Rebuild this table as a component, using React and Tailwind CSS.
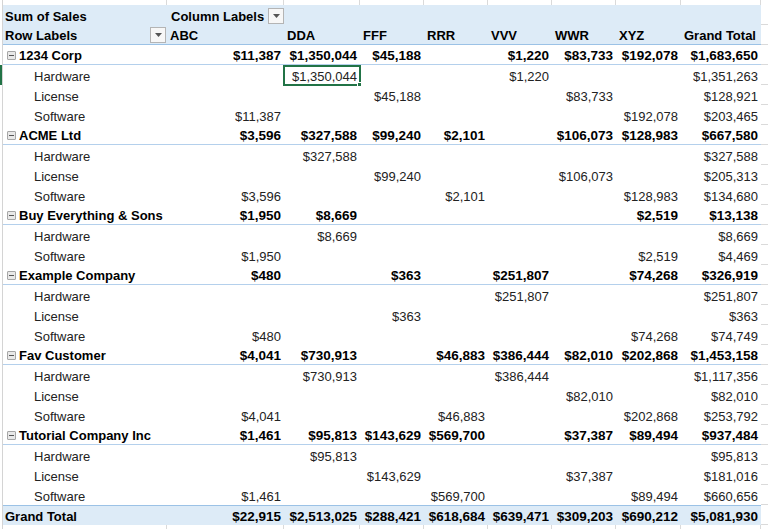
const widths = ["w-[164px]", "w-[117px]", "w-[76px]", "w-[64px]", "w-[64px]", "w-[64px]", "w-[64px]", "w-[65px]", "w-[80px]"];
const colNames = ["ABC", "DDA", "FFF", "RRR", "VVV", "WWR", "XYZ", "Grand Total"];

const groups = [
  {
    name: "1234 Corp",
    total: ["$11,387", "$1,350,044", "$45,188", "", "$1,220", "$83,733", "$192,078", "$1,683,650"],
    items: [
      ["Hardware", ["", "$1,350,044", "", "", "$1,220", "", "", "$1,351,263"]],
      ["License", ["", "", "$45,188", "", "", "$83,733", "", "$128,921"]],
      ["Software", ["$11,387", "", "", "", "", "", "$192,078", "$203,465"]],
    ],
  },
  {
    name: "ACME Ltd",
    total: ["$3,596", "$327,588", "$99,240", "$2,101", "", "$106,073", "$128,983", "$667,580"],
    items: [
      ["Hardware", ["", "$327,588", "", "", "", "", "", "$327,588"]],
      ["License", ["", "", "$99,240", "", "", "$106,073", "", "$205,313"]],
      ["Software", ["$3,596", "", "", "$2,101", "", "", "$128,983", "$134,680"]],
    ],
  },
  {
    name: "Buy Everything & Sons",
    total: ["$1,950", "$8,669", "", "", "", "", "$2,519", "$13,138"],
    items: [
      ["Hardware", ["", "$8,669", "", "", "", "", "", "$8,669"]],
      ["Software", ["$1,950", "", "", "", "", "", "$2,519", "$4,469"]],
    ],
  },
  {
    name: "Example Company",
    total: ["$480", "", "$363", "", "$251,807", "", "$74,268", "$326,919"],
    items: [
      ["Hardware", ["", "", "", "", "$251,807", "", "", "$251,807"]],
      ["License", ["", "", "$363", "", "", "", "", "$363"]],
      ["Software", ["$480", "", "", "", "", "", "$74,268", "$74,749"]],
    ],
  },
  {
    name: "Fav Customer",
    total: ["$4,041", "$730,913", "", "$46,883", "$386,444", "$82,010", "$202,868", "$1,453,158"],
    items: [
      ["Hardware", ["", "$730,913", "", "", "$386,444", "", "", "$1,117,356"]],
      ["License", ["", "", "", "", "", "$82,010", "", "$82,010"]],
      ["Software", ["$4,041", "", "", "$46,883", "", "", "$202,868", "$253,792"]],
    ],
  },
  {
    name: "Tutorial Company Inc",
    total: ["$1,461", "$95,813", "$143,629", "$569,700", "", "$37,387", "$89,494", "$937,484"],
    items: [
      ["Hardware", ["", "$95,813", "", "", "", "", "", "$95,813"]],
      ["License", ["", "", "$143,629", "", "", "$37,387", "", "$181,016"]],
      ["Software", ["$1,461", "", "", "$569,700", "", "", "$89,494", "$660,656"]],
    ],
  },
];

const grand = ["$22,915", "$2,513,025", "$288,421", "$618,684", "$639,471", "$309,203", "$690,212", "$5,081,930"];

function DropButton() {
  return (
    <div className="flex h-[16px] w-[16px] items-center justify-center border border-[#b4b4b4] bg-[#f7f7f7]">
      <svg width="7" height="4" viewBox="0 0 7 4">
        <path d="M0 0 L7 0 L3.5 4 Z" fill="#555" />
      </svg>
    </div>
  );
}

function Collapse() {
  return (
    <div className="mr-[3px] flex h-[9px] w-[9px] items-center justify-center rounded-[1px] border border-[#a6a6a6] bg-[#e8e8e8]">
      <div className="h-px w-[5px] bg-[#555]" />
    </div>
  );
}

function Strip({ height }) {
  return (
    <div className={`flex ${height}`}>
      <div className="w-[3px] border-r border-[#d4d4d4]" />
      {widths.map((w, i) => (
        <div key={i} className={`${w} border-r border-[#dadada]`} />
      ))}
      <div className="w-[7px]" />
    </div>
  );
}

function Row({ children, rowClass = "", selected = false }) {
  return (
    <div className="flex h-[20px]">
      <div className="flex w-[3px] border-r border-[#d4d4d4]">
        {selected ? <div className="w-[2px] bg-[#217346]" /> : null}
      </div>
      <div className={`flex w-[758px] pt-[2px] ${rowClass}`}>{children}</div>
      <div className="w-[7px] border-b border-[#dadada]" />
    </div>
  );
}

function Values({ values, bold, selectedCol = -1 }) {
  return values.map((v, i) => (
    <div
      key={i}
      className={`${widths[i + 1]} relative flex items-center justify-end pr-[3px] ${
        bold ? "text-[13.5px] font-bold text-black" : "text-[13px] text-[#222]"
      }`}
    >
      {v}
      {i === selectedCol ? (
        <div className="absolute -bottom-[1px] -left-[1px] -right-[1px] -top-[2px] border-2 border-[#217346]">
          <div className="absolute -bottom-[3px] -right-[3px] h-[5px] w-[5px] border border-white bg-[#217346]" />
        </div>
      ) : null}
    </div>
  ));
}

export default function App() {
  return (
    <div
      className="h-[529px] w-[768px] overflow-hidden bg-white text-[13px] leading-[17px] text-[#222]"
      style={{ fontFamily: '"Liberation Sans", Arial, sans-serif' }}
    >
      <Strip height="h-[5px]" />

      {/* header rows */}
      <Row rowClass="bg-[#ddebf7]">
        <div className={`${widths[0]} flex items-center pl-[2px] font-bold text-black`}>Sum of Sales</div>
        <div className="-mt-[1px] flex items-center gap-[4px] pl-[4px] font-bold text-black">
          <span className="pt-[1px]">Column Labels</span>
          <DropButton />
        </div>
      </Row>
      <Row rowClass="bg-[#ddebf7] border-b border-[#9bc2e6]">
        <div className={`${widths[0]} -mt-[1px] flex items-center justify-between pl-[2px] pr-[1px] font-bold text-black`}>
          <span className="pt-[1px]">Row Labels</span>
          <DropButton />
        </div>
        {colNames.map((c, i) => (
          <div key={c} className={`${widths[i + 1]} flex items-center pl-[3px] font-bold text-black`}>
            {c}
          </div>
        ))}
      </Row>

      {groups.map((g, gi) => (
        <div key={g.name}>
          <Row rowClass="border-b border-[#b4d0ec]">
            <div className={`${widths[0]} flex items-center pl-[4px] font-bold text-black`}>
              <Collapse />
              {g.name}
            </div>
            <Values values={g.total} bold />
          </Row>
          {g.items.map(([label, vals], ii) => (
            <Row key={label} selected={gi === 0 && ii === 0}>
              <div className={`${widths[0]} flex items-center pl-[31px]`}>{label}</div>
              <Values values={vals} selectedCol={gi === 0 && ii === 0 ? 1 : -1} />
            </Row>
          ))}
        </div>
      ))}

      <Row rowClass="bg-[#ddebf7] border-t border-[#9bc2e6]">
        <div className={`${widths[0]} flex items-center pl-[2px] font-bold text-black`}>Grand Total</div>
        <Values values={grand} bold />
      </Row>

      <Strip height="h-[4px]" />
    </div>
  );
}
